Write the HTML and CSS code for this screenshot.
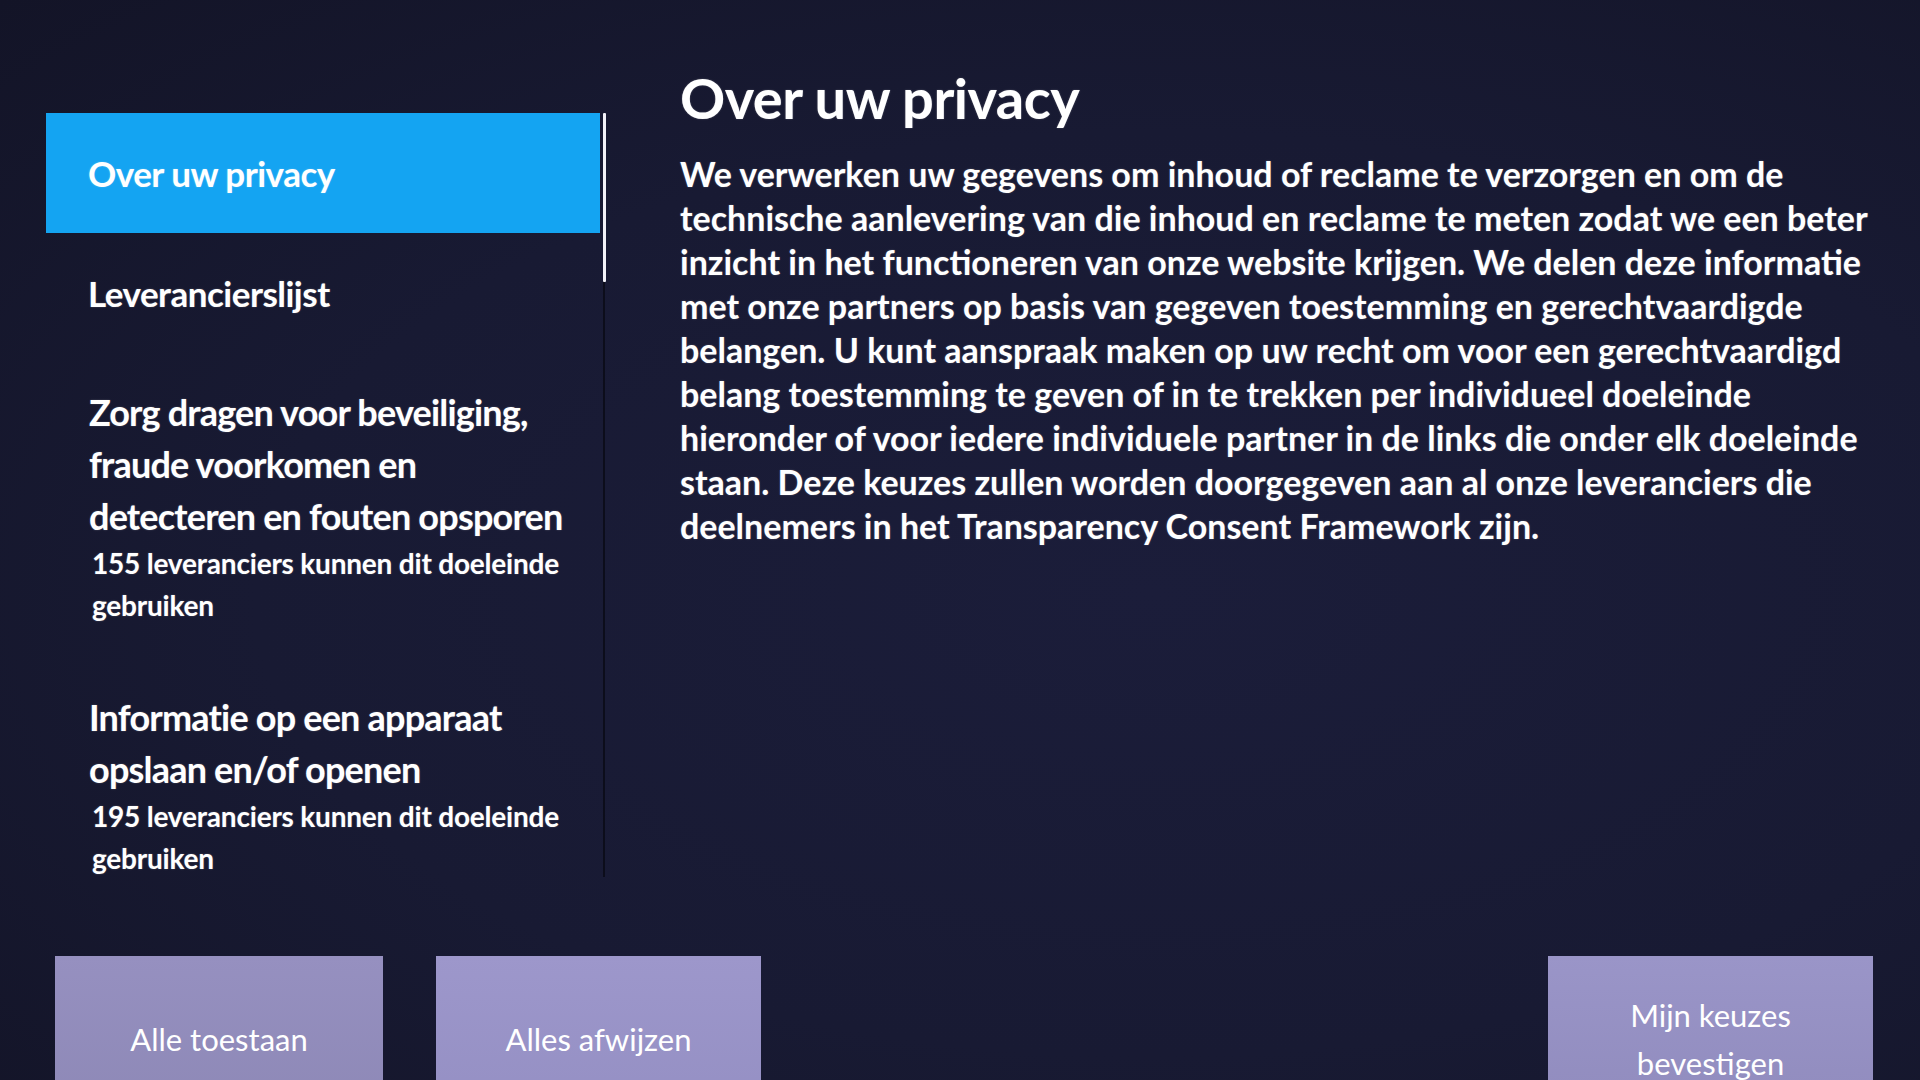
FILE: index.html
```html
<!DOCTYPE html>
<html lang="nl">
<head>
<meta charset="utf-8">
<title>Over uw privacy</title>
<link rel="stylesheet" href="styles.css">
</head>
<body>
<div class="screen">
  <div class="main">
    <nav class="nav">
      <div class="thumb"></div>
      <div class="item item-active">Over uw privacy</div>
      <div class="item">Leverancierslijst</div>
      <div class="item item-purpose">
        <div class="purpose-title">Zorg dragen voor beveiliging, fraude voorkomen en detecteren en fouten opsporen</div>
        <div class="purpose-sub">155 leveranciers kunnen dit doeleinde gebruiken</div>
      </div>
      <div class="item item-purpose">
        <div class="purpose-title">Informatie op een apparaat opslaan en/of openen</div>
        <div class="purpose-sub">195 leveranciers kunnen dit doeleinde gebruiken</div>
      </div>
    </nav>
    <section class="content">
      <h1 class="title">Over uw privacy</h1>
      <p class="text">We verwerken uw gegevens om inhoud of reclame te verzorgen en om de technische aanlevering van die inhoud en reclame te meten zodat we een beter inzicht in het functioneren van onze website krijgen. We delen deze informatie met onze partners op basis van gegeven toestemming en gerechtvaardigde belangen. U kunt aanspraak maken op uw recht om voor een gerechtvaardigd belang toestemming te geven of in te trekken per individueel doeleinde hieronder of voor iedere individuele partner in de links die onder elk doeleinde staan. Deze keuzes zullen worden doorgegeven aan al onze leveranciers die deelnemers in het Transparency Consent Framework zijn.</p>
    </section>
  </div>
  <div class="actions">
    <div class="btn-group">
      <button class="btn btn-accept">Alle toestaan</button>
      <button class="btn btn-reject">Alles afwijzen</button>
    </div>
    <button class="btn btn-confirm">Mijn keuzes bevestigen</button>
  </div>
</div>
</body>
</html>
```
FILE: styles.css
```css
html, body {
  margin: 0;
  padding: 0;
  height: 100%;
  overflow: hidden;
}
body {
  background: radial-gradient(ellipse at 60% 55%, #1b1d3a 0%, #181a33 55%, #131427 100%);
  color: #ffffff;
  font-family: Lato, "Open Sans", sans-serif;
}
.screen {
  width: 1920px;
  height: 1080px;
  display: flex;
  flex-direction: column;
}
.main {
  display: flex;
  height: 956px;
  flex-shrink: 0;
}
.nav {
  position: relative;
  margin-left: 46px;
  margin-top: 113px;
  width: 557px;
  height: 764px;
  border-right: 2px solid #0c0d1b;
  display: flex;
  flex-direction: column;
  text-shadow: 0 0 2px rgba(255, 255, 255, 0.25);
}
.thumb {
  position: absolute;
  right: -3px;
  top: 0;
  width: 3px;
  height: 169px;
  background: #f2f2f8;
  border-radius: 1px;
}
.item {
  height: 120px;
  display: flex;
  align-items: center;
  padding-left: 42px;
  font-size: 35px;
  font-weight: 700;
  letter-spacing: -0.5px;
  flex-shrink: 0;
}
.item-active {
  background: #14a4f2;
  margin-right: 3px;
}
.item-purpose {
  height: auto;
  display: block;
  padding: 33px 30px 32px 43px;
}
.purpose-title {
  font-size: 36px;
  line-height: 52px;
  letter-spacing: -0.8px;
}
.purpose-sub {
  font-size: 28px;
  line-height: 42px;
  letter-spacing: -0.2px;
  padding-left: 3px;
}
.content {
  margin-left: 75px;
  padding-top: 63px;
  width: 1200px;
  text-shadow: 0 0 2px rgba(255, 255, 255, 0.25);
}
.title {
  margin: 0;
  font-size: 56px;
  line-height: 70px;
  font-weight: 700;
  letter-spacing: -0.5px;
}
.text {
  margin: 19px 0 0;
  font-size: 34px;
  line-height: 44px;
  font-weight: 700;
  letter-spacing: 0;
}
.actions {
  display: flex;
  justify-content: space-between;
  flex-shrink: 0;
  padding: 0 47px 0 55px;
}
.btn-group {
  display: flex;
  gap: 53px;
}
.btn {
  width: 325px;
  height: 165px;
  border: none;
  padding: 0 45px;
  background: linear-gradient(180deg, #9690c0 0%, #8d88b6 100%);
  color: #ffffff;
  font-family: Lato, "Open Sans", sans-serif;
  font-size: 31px;
  line-height: 48px;
  font-weight: 400;
  text-align: center;
}
.btn-accept {
  width: 328px;
}
.btn-reject {
  background: linear-gradient(180deg, #9d97cb 0%, #948fc3 100%);
}
.btn-confirm {
  background: linear-gradient(180deg, #9a95c8 0%, #908bbd 100%);
}
```
